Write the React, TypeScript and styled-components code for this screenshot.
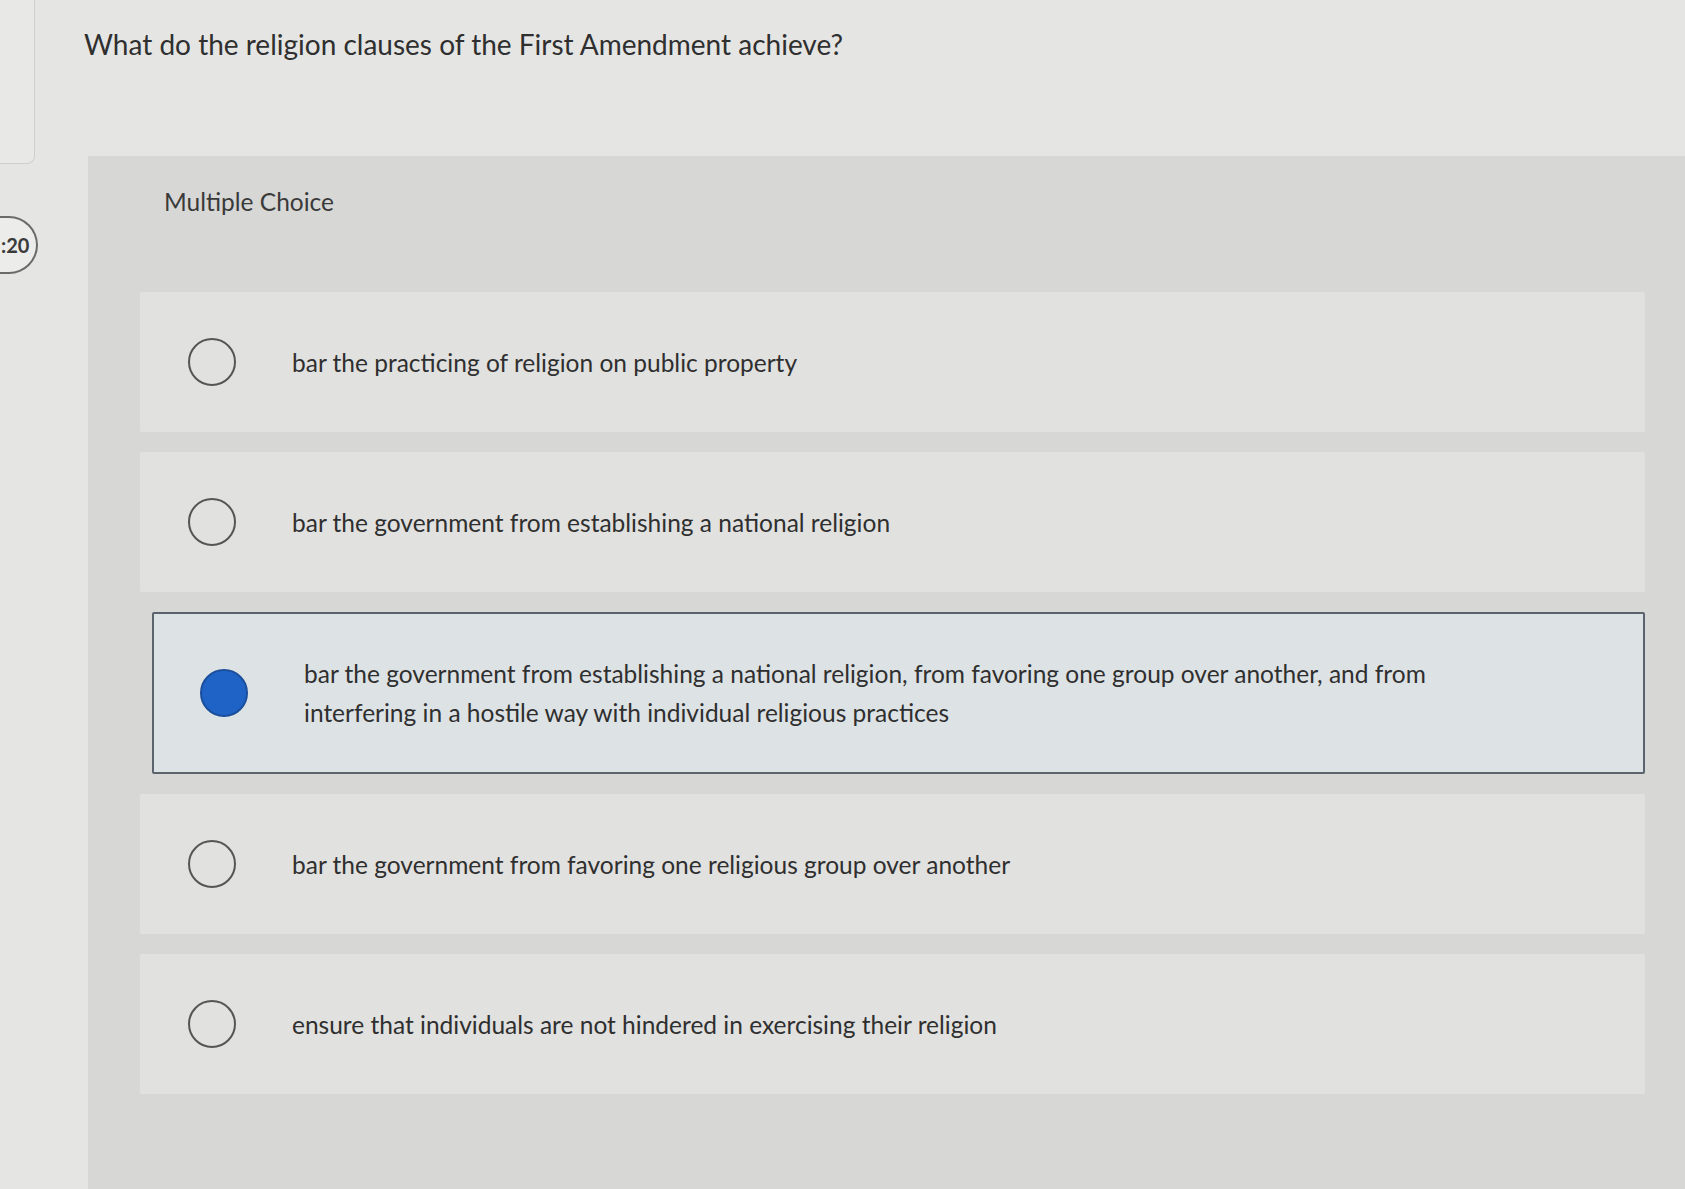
import styled, {createGlobalStyle} from "styled-components";

const GlobalStyle = createGlobalStyle`
  html, body {
    margin: 0;
    padding: 0;
    background: #e5e5e3;
    font-family: "Lato", "Open Sans", sans-serif;
    color: #2f2f2f;
  }
`

const Page = styled.div`
  display: flex;
  min-height: 1189px;
  overflow: hidden;
`

const Sidebar = styled.div`
  width: 40px;
  flex-shrink: 0;
  display: flex;
  flex-direction: column;
`

const SideTab = styled.div`
  width: 35px;
  height: 164px;
  box-sizing: border-box;
  border: 1px solid #cfcfcd;
  border-left: none;
  border-top: none;
  border-bottom-right-radius: 8px;
  background: #e8e8e6;
`

const TimerBadge = styled.div`
  margin-top: 52px;
  width: 38px;
  height: 58px;
  box-sizing: border-box;
  border: 2px solid #6a6a6a;
  border-left: none;
  border-radius: 0 29px 29px 0;
  background: #ececea;
  display: flex;
  align-items: center;
  padding-left: 1px;
  font-size: 20px;
  font-weight: 700;
  color: #3a3a3a;
`

const Main = styled.div`
  flex: 1;
  display: flex;
  flex-direction: column;
  padding-top: 27px;
`

const Question = styled.h1`
  margin: 0 0 0 44px;
  font-size: 28px;
  font-weight: 400;
  color: #2f2f2f;
`

const Panel = styled.div`
  margin: 95px 0 0 48px;
  background: #d7d7d6;
  padding: 31px 40px 80px 52px;
  flex: 1;
`

const PanelLabel = styled.div`
  margin-left: 24px;
  font-size: 24.5px;
  color: #3a3a3a;
`

const Options = styled.div`
  margin-top: 76px;
  display: flex;
  flex-direction: column;
  gap: 20px;
`

const OptionCard = styled.div<{ $selected?: boolean }>`
  display: flex;
  align-items: center;
  min-height: ${p => (p.$selected ? 162 : 140)}px;
  box-sizing: border-box;
  padding: 0 40px 0 46px;
  background: ${p => (p.$selected ? "#dde2e5" : "#e1e1e0")};
  border: 2px solid ${p => (p.$selected ? "#5b636c" : "transparent")};
  border-radius: 2px;
  margin-left: ${p => (p.$selected ? 12 : 0)}px;
`

const Radio = styled.span<{ $checked?: boolean }>`
  width: 48px;
  height: 48px;
  flex-shrink: 0;
  box-sizing: border-box;
  border-radius: 50%;
  border: 2px solid ${p => (p.$checked ? "#1b4f9c" : "#555")};
  background: ${p => (p.$checked ? "#1f63c6" : "transparent")};
`

const OptionText = styled.div`
  margin-left: 56px;
  font-size: 24.5px;
  line-height: 39px;
  color: #2f2f2f;
  max-width: 1150px;
`

const choices = [
  "bar the practicing of religion on public property",
  "bar the government from establishing a national religion",
  "bar the government from establishing a national religion, from favoring one group over another, and from interfering in a hostile way with individual religious practices",
  "bar the government from favoring one religious group over another",
  "ensure that individuals are not hindered in exercising their religion",
];

const App = () => {
  const selected = 2;
  return (
    <>
      <GlobalStyle />
      <Page>
        <Sidebar>
          <SideTab />
          <TimerBadge>:20</TimerBadge>
        </Sidebar>
        <Main>
          <Question>What do the religion clauses of the First Amendment achieve?</Question>
          <Panel>
            <PanelLabel>Multiple Choice</PanelLabel>
            <Options>
              {choices.map((text, index) => (
                <OptionCard key={index} $selected={index === selected}>
                  <Radio $checked={index === selected} />
                  <OptionText>{text}</OptionText>
                </OptionCard>
              ))}
            </Options>
          </Panel>
        </Main>
      </Page>
    </>
  );
};

export default App;
